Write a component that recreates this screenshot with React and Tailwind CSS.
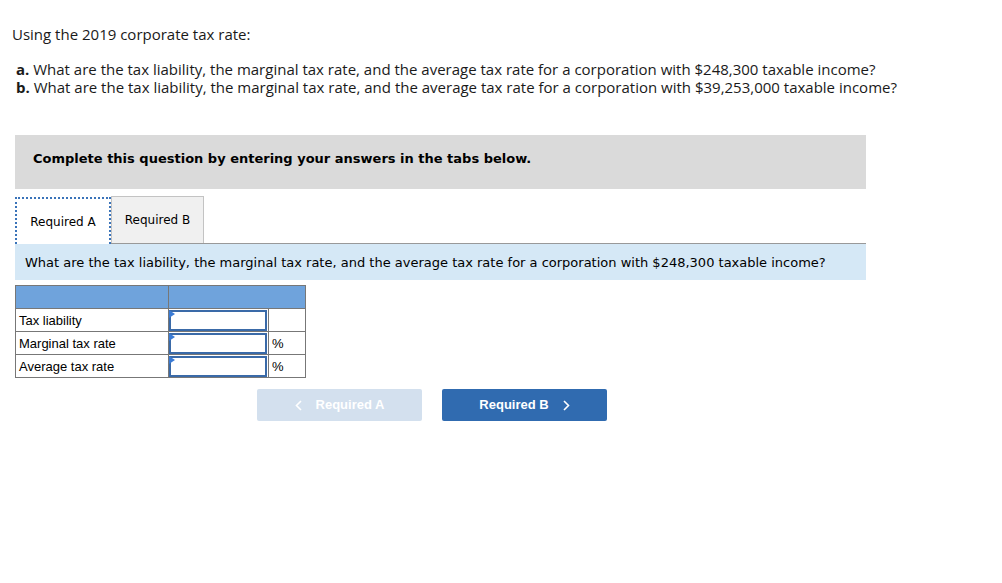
export default function App() {
  const rows = [
    { label: "Tax liability", unit: "" },
    { label: "Marginal tax rate", unit: "%" },
    { label: "Average tax rate", unit: "%" },
  ];

  return (
    <div className="bg-white w-[1002px] h-[583px] text-[#1a1a1a]">
      <div className="px-3 pt-[24px] font-['Open_Sans',sans-serif]">
        {/* Question */}
        <p className="text-[15px] leading-[20px]">Using the 2019 corporate tax rate:</p>
        <div className="mt-[16px] pl-[4px] text-[15px] leading-[18px]">
          <p>
            <b>a.</b> What are the tax liability, the marginal tax rate, and the average tax rate for a corporation with $248,300 taxable income?
          </p>
          <p>
            <b>b.</b> What are the tax liability, the marginal tax rate, and the average tax rate for a corporation with $39,253,000 taxable income?
          </p>
        </div>
      </div>

      <div className="ml-[15px] w-[851px] mt-[39px] font-['DejaVu_Sans',Verdana,sans-serif]">
        {/* Instructions */}
        <div className="bg-[#dadada] h-[54px] pt-[11px] pl-[18px]">
          <span className="text-[13px] font-bold text-black">
            Complete this question by entering your answers in the tabs below.
          </span>
        </div>

        {/* Tabs */}
        <div className="mt-[7px] flex items-end border-b border-[#999999]">
          <div className="w-[96px] h-[47px] flex items-center justify-center bg-white border-2 border-dotted border-[#3a73b9] border-b-0 -mb-px text-[12px] text-black">
            Required A
          </div>
          <div className="w-[93px] h-[47px] flex items-center justify-center bg-[#f0f0f0] border border-[#c3c3c3] border-b-0 text-[12px] text-black">
            Required B
          </div>
        </div>
        <div className="bg-[#d5e8f6] h-[36px] flex items-center pl-[10px] pt-[2px] text-[13px] text-black">
          What are the tax liability, the marginal tax rate, and the average tax rate for a corporation with $248,300 taxable income?
        </div>

        {/* Answer table */}
        <table className="mt-[5px] border-collapse font-['Liberation_Sans',Arial,sans-serif] text-[13px] text-black">
          <thead>
            <tr className="h-[23px] bg-[#6fa3dc]">
              <th className="w-[153px] border border-[#777777]"></th>
              <th colSpan={2} className="border border-[#777777]"></th>
            </tr>
          </thead>
          <tbody>
            {rows.map((r) => (
              <tr key={r.label} className="h-[23px]">
                <td className="w-[153px] border border-[#777777] pl-[3px] leading-[21px]">{r.label}</td>
                <td className="w-[100px] border border-[#777777] p-0">
                  <div className="relative h-[21px] mr-px border-2 border-[#3a6aa8]">
                    <span className="absolute -left-[2px] -top-[2px] w-0 h-0 border-y-[4px] border-y-transparent border-l-[6px] border-l-[#3a7bd5]"></span>
                  </div>
                </td>
                <td className="w-[37px] border border-[#777777] pl-[3px] leading-[21px]">{r.unit}</td>
              </tr>
            ))}
          </tbody>
        </table>

        {/* Nav buttons */}
        <div className="mt-[11px] ml-[242px] flex gap-[20px] font-['Liberation_Sans',Arial,sans-serif] text-[13px] font-bold text-white">
          <div className="w-[165px] h-[32px] rounded-[2px] bg-[#d3e0ee] flex items-center justify-center gap-[14px]">
            <svg width="7" height="11" viewBox="0 0 7 11" fill="none" stroke="white" strokeWidth="1.6">
              <path d="M6 1 L1.5 5.5 L6 10" />
            </svg>
            <span>Required A</span>
          </div>
          <div className="w-[165px] h-[32px] rounded-[2px] bg-[#306bb0] flex items-center justify-center gap-[14px]">
            <span>Required B</span>
            <svg width="7" height="11" viewBox="0 0 7 11" fill="none" stroke="white" strokeWidth="1.6">
              <path d="M1 1 L5.5 5.5 L1 10" />
            </svg>
          </div>
        </div>
      </div>
    </div>
  );
}
